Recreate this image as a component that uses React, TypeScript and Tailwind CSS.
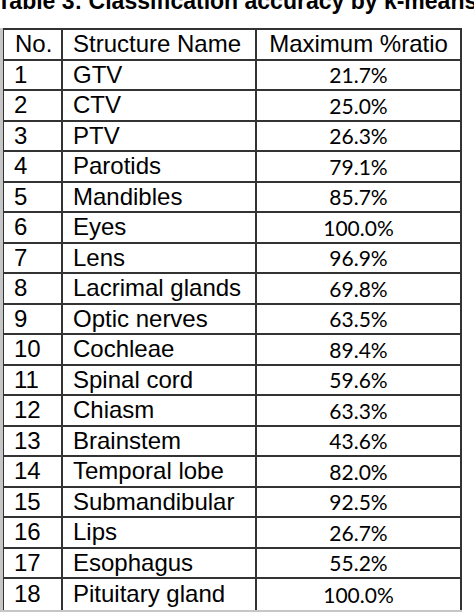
import React from 'react';

const rows: [number, string, string][] = [
  [1, 'GTV', '21.7%'],
  [2, 'CTV', '25.0%'],
  [3, 'PTV', '26.3%'],
  [4, 'Parotids', '79.1%'],
  [5, 'Mandibles', '85.7%'],
  [6, 'Eyes', '100.0%'],
  [7, 'Lens', '96.9%'],
  [8, 'Lacrimal glands', '69.8%'],
  [9, 'Optic nerves', '63.5%'],
  [10, 'Cochleae', '89.4%'],
  [11, 'Spinal cord', '59.6%'],
  [12, 'Chiasm', '63.3%'],
  [13, 'Brainstem', '43.6%'],
  [14, 'Temporal lobe', '82.0%'],
  [15, 'Submandibular', '92.5%'],
  [16, 'Lips', '26.7%'],
  [17, 'Esophagus', '55.2%'],
  [18, 'Pituitary gland', '100.0%'],
];

const arial = { fontFamily: '"Liberation Sans", Arial, sans-serif' };
const calibri = { fontFamily: 'Lato, "Open Sans", sans-serif' };

export default function App() {
  return (
    <div className="w-[474px] h-[612px] overflow-hidden bg-white text-black">
      <div
        className="-mt-[10px] -ml-[3px] h-[23px] whitespace-nowrap text-[23px] leading-[23px] font-bold"
        style={arial}
      >
        Table 3: Classification accuracy by k-means
      </div>
      <div className="mt-[15px] w-[462px] border-l-[3px] border-b-[3px] border-[#c6c6c6]">
        <div className="border-t-2 border-l border-r-2 border-[#333]">
          <div className="flex h-[30.5px] border-b-2 border-[#333] text-[24px]" style={arial}>
            <div className="w-[59px] border-r-2 border-[#333] pl-[11px] flex items-center">No.</div>
            <div className="w-[194px] border-r-2 border-[#333] pl-[10px] flex items-center">Structure Name</div>
            <div className="flex-1 flex items-center justify-center">Maximum %ratio</div>
          </div>
          {rows.map(([n, name, pct], i) => (
            <div
              key={n}
              className={`flex h-[30.5px] ${i < rows.length - 1 ? 'border-b-2 border-[#333]' : ''}`}
            >
              <div
                className="w-[59px] border-r-2 border-[#333] pl-[10px] flex items-center text-[24px]"
                style={arial}
              >
                {n}
              </div>
              <div
                className="w-[194px] border-r-2 border-[#333] pl-[10px] flex items-center text-[24px]"
                style={arial}
              >
                {name}
              </div>
              <div className="flex-1 flex items-center justify-center text-[21px]" style={calibri}>
                {pct}
              </div>
            </div>
          ))}
        </div>
      </div>
    </div>
  );
}
